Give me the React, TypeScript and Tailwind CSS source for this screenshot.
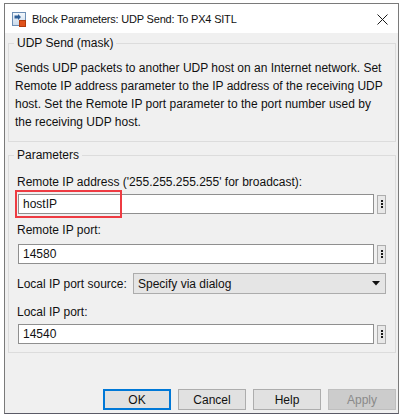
import React from "react";

function Dots() {
  return (
    <div className="ml-[3px] flex h-[19px] w-[9px] flex-col items-center justify-center gap-[1px] border border-[#adadad] bg-[#e8e8e8]">
      <div className="h-[2px] w-[2px] bg-[#1a1a1a]" />
      <div className="h-[2px] w-[2px] bg-[#1a1a1a]" />
      <div className="h-[2px] w-[2px] bg-[#1a1a1a]" />
    </div>
  );
}

function TextRow({ value, highlight }: { value: string; highlight?: boolean }) {
  return (
    <div className="flex items-center">
      <div className="relative ml-[1px] flex h-[20px] w-[356px] items-center border border-[#8f8f8f] bg-white pl-[4px] leading-none">
        {value}
        {highlight && (
          <div className="pointer-events-none absolute left-[-4px] top-[-5px] h-[28px] w-[107px] border-2 border-[#ee3b42]" />
        )}
      </div>
      <Dots />
    </div>
  );
}

export default function App() {
  return (
    <div
      className="h-[419px] w-[405px] bg-white pl-[4px] pt-[3px] text-[12px] text-[#111]"
      style={{ fontFamily: '"Liberation Sans", Arial, sans-serif' }}
    >
      <div className="flex h-[411px] w-[395px] flex-col border border-[#7a7a7a] border-b-[#5a5a66]">
        {/* Title bar */}
        <div className="flex h-[29px] shrink-0 items-center bg-white pl-[7px] pr-[10px]">
          <svg width="15" height="15" viewBox="0 0 15 15" className="mt-[1px] shrink-0">
            <defs>
              <linearGradient id="ig" x1="0" y1="0" x2="0" y2="1">
                <stop offset="0" stopColor="#f4f8fc" />
                <stop offset="1" stopColor="#c9d9ea" />
              </linearGradient>
            </defs>
            <rect x="0.5" y="0.5" width="13" height="13" fill="url(#ig)" stroke="#6d8fb5" />
            <path d="M2.5 3.5 H6 V2 L9 5 L6 8 V6.5 H2.5 Z" fill="#2f5f97" />
            <rect x="7.5" y="8.5" width="6" height="6" fill="#e0521b" stroke="#b23a0c" />
          </svg>
          <span className="ml-[5px] mt-[2px] text-[11px] tracking-[-0.2px]">
            Block Parameters: UDP Send: To PX4 SITL
          </span>
          <svg width="11" height="11" viewBox="0 0 11 11" className="ml-auto mt-[2px]">
            <path d="M0.5 0.5 L10.5 10.5 M10.5 0.5 L0.5 10.5" stroke="#1a1a1a" strokeWidth="1" />
          </svg>
        </div>

        {/* Content */}
        <div className="flex flex-1 flex-col bg-[#f0f0f0] pl-[3px] pr-[2px]">
          <fieldset className="mt-[1px] border border-[#dcdcdc] pb-[10px] pl-[6px] pt-[7px] leading-[18px]">
            <legend className="-ml-[1px] px-[3px] leading-[18px]">UDP Send (mask)</legend>
            <div>
              Sends UDP packets to another UDP host on an Internet network. Set
              <br />
              Remote IP address parameter to the IP address of the receiving UDP
              <br />
              host. Set the Remote IP port parameter to the port number used by
              <br />
              the receiving UDP host.
            </div>
          </fieldset>

          <fieldset className="mt-[4px] border border-[#dcdcdc] pb-[8px] pl-[8px] pt-[9px] leading-[18px]">
            <legend className="-ml-[3px] px-[3px] leading-[18px]">Parameters</legend>
            <div className="h-[18px]">Remote IP address ('255.255.255.255' for broadcast):</div>
            <div className="mt-[3px]">
              <TextRow value="hostIP" highlight />
            </div>
            <div className="mt-[7px] h-[18px]">Remote IP port:</div>
            <div className="mt-[5px]">
              <TextRow value="14580" />
            </div>
            <div className="mt-[9px] flex h-[21px] items-center">
              <span className="w-[116px]">Local IP port source:</span>
              <div className="flex h-[21px] w-[253px] items-center border border-[#acacac] bg-[#e5e5e5] pl-[4px] pr-[5px]">
                <span>Specify via dialog</span>
                <svg width="8" height="5" viewBox="0 0 8 5" className="ml-auto">
                  <path d="M0 0 H8 L4 4.5 Z" fill="#111" />
                </svg>
              </div>
            </div>
            <div className="mt-[9px] h-[18px]">Local IP port:</div>
            <div className="mt-[3px]">
              <TextRow value="14540" />
            </div>
          </fieldset>

          <div className="mt-auto mb-[3px] flex justify-end gap-[7px]">
            <button className="flex h-[21px] w-[68px] items-center justify-center border-2 border-[#0078d7] bg-[#e1e1e1]">
              OK
            </button>
            <button className="flex h-[21px] w-[68px] items-center justify-center border border-[#adadad] bg-[#e1e1e1]">
              Cancel
            </button>
            <button className="flex h-[21px] w-[68px] items-center justify-center border border-[#adadad] bg-[#e1e1e1]">
              Help
            </button>
            <button className="flex h-[21px] w-[68px] items-center justify-center border border-[#bfbfbf] bg-[#cccccc] text-[#8a8a8a]">
              Apply
            </button>
          </div>
        </div>
      </div>
    </div>
  );
}
